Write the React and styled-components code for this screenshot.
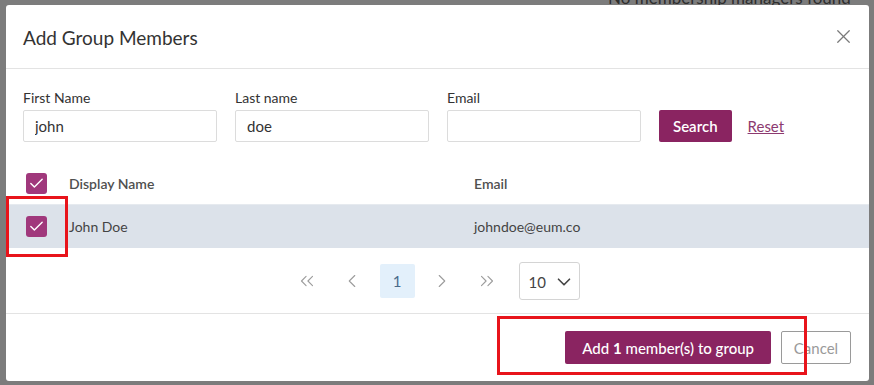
import styled, { createGlobalStyle } from "styled-components";
import { ChevronsLeft, ChevronLeft, ChevronRight, ChevronsRight, ChevronDown, X, Check } from "lucide-react";

const GlobalStyle = createGlobalStyle`
  html, body { margin: 0; padding: 0; }
  body {
    width: 874px;
    height: 385px;
    overflow: hidden;
    background: #7c7c7c;
    font-family: "Lato", "Open Sans", sans-serif;
  }
`;

const purple = "#8a2461";

const Backdrop = styled.div`
  position: relative;
  width: 874px;
  height: 385px;
  background: #7c7c7c;
  overflow: hidden;
`;

const BehindText = styled.div`
  position: absolute;
  left: 608px;
  top: -12px;
  font-size: 17px;
  line-height: 20px;
  color: #2e2e2e;
`;

const Modal = styled.div`
  position: absolute;
  left: 6px;
  top: 5px;
  width: 863px;
  height: 376px;
  background: #fff;
  border-radius: 3px;
  display: flex;
  flex-direction: column;
`;

const Header = styled.div`
  height: 63px;
  padding: 0 17px;
  display: flex;
  align-items: center;
  justify-content: space-between;
  border-bottom: 1px solid #e3e3e3;
`;

const Title = styled.h2`
  margin: 0;
  font-size: 19px;
  font-weight: 400;
  color: #333;
  padding-top: 2px;
`;

const CloseButton = styled.button`
  border: none;
  background: none;
  padding: 0;
  margin-right: -3px;
  color: #7a7a7a;
  display: flex;
`;

const SearchForm = styled.div`
  display: flex;
  align-items: flex-end;
  gap: 18px;
  padding: 19px 17px 0;
`;

const Field = styled.label`
  display: flex;
  flex-direction: column;
  gap: 2px;
  width: 194px;
`;

const Label = styled.span`
  font-size: 14px;
  line-height: 20px;
  color: #333;
`;

const Input = styled.input`
  box-sizing: border-box;
  height: 32px;
  width: 100%;
  border: 1px solid #dcdcdc;
  border-radius: 2px;
  padding: 0 11px;
  font-family: inherit;
  font-size: 15px;
  color: #333;
  outline: none;
`;

const PrimaryButton = styled.button`
  height: ${(p) => p.$h || 32}px;
  padding: 0 ${(p) => p.$px || 14}px;
  border: none;
  border-radius: 2px;
  background: ${purple};
  color: #fff;
  font-family: inherit;
  font-size: 15px;
  font-weight: ${(p) => p.$weight || 600};
  cursor: pointer;
`;

const ResetLink = styled.a`
  height: 32px;
  margin-left: -2px;
  display: flex;
  align-items: center;
  font-size: 15px;
  color: #8c3a70;
  text-decoration: underline;
`;

const Table = styled.div`
  margin-top: 20px;
  display: flex;
  flex-direction: column;
`;

const Row = styled.div`
  display: grid;
  grid-template-columns: 43px 405px 1fr;
  align-items: center;
  height: ${(p) => (p.$head ? 42 : 43)}px;
  padding-left: 20px;
  background: ${(p) => (p.$selected ? "#dce2ea" : "#fff")};
  border-top: ${(p) => (p.$head ? "none" : "1px solid #e6eaef")};
  font-size: 14px;
  color: ${(p) => (p.$head ? "#505050" : "#444")};
  font-weight: ${(p) => (p.$head ? 600 : 400)};
`;

const Checkbox = styled.span`
  width: 21px;
  height: 21px;
  border-radius: 3px;
  background: #a0387c;
  color: #fff;
  display: flex;
  align-items: center;
  justify-content: center;
`;

const Pager = styled.div`
  height: 65px;
  display: flex;
  align-items: center;
  justify-content: center;
  gap: 10px;
  border-bottom: 1px solid #e3e3e3;
  padding-right: 6px;
`;

const PageItem = styled.span`
  width: 35px;
  height: 34px;
  display: flex;
  align-items: center;
  justify-content: center;
  border-radius: 2px;
  font-size: 15px;
  color: ${(p) => (p.$active ? "#4a6a8a" : "#9c9c9c")};
  background: ${(p) => (p.$active ? "#e3f0fb" : "transparent")};
`;

const PageSize = styled.div`
  margin-left: 4px;
  box-sizing: border-box;
  width: 61px;
  height: 38px;
  border: 1px solid #d4d4d4;
  border-radius: 3px;
  display: flex;
  align-items: center;
  gap: 7px;
  padding: 2px 0 0 9px;
  font-size: 15px;
  color: #444;
`;

const Footer = styled.div`
  flex: 1;
  display: flex;
  align-items: center;
  justify-content: flex-end;
  gap: 10px;
  padding: 0 18px 0 0;
`;

const CancelButton = styled.button`
  height: 33px;
  width: 70px;
  border: 1px solid #9a9a9a;
  border-radius: 2px;
  background: #fff;
  color: #9a9a9a;
  font-family: inherit;
  font-size: 15px;
`;

const Highlight = styled.div`
  position: absolute;
  left: ${(p) => p.$x}px;
  top: ${(p) => p.$y}px;
  width: ${(p) => p.$w}px;
  height: ${(p) => p.$h}px;
  box-sizing: border-box;
  border: 3px solid #e8141b;
  pointer-events: none;
`;

const CheckBox = () => (
  <Checkbox>
    <Check size={17} strokeWidth={2} />
  </Checkbox>
);

export default function App() {
  return (
    <>
      <GlobalStyle />
      <Backdrop>
        <BehindText>No membership managers found</BehindText>
        <Modal>
          <Header>
            <Title>Add Group Members</Title>
            <CloseButton aria-label="Close">
              <X size={23} strokeWidth={1.3} />
            </CloseButton>
          </Header>

          <SearchForm>
            <Field>
              <Label>First Name</Label>
              <Input defaultValue="john" />
            </Field>
            <Field>
              <Label>Last name</Label>
              <Input defaultValue="doe" />
            </Field>
            <Field>
              <Label>Email</Label>
              <Input />
            </Field>
            <PrimaryButton $px={14}>Search</PrimaryButton>
            <ResetLink>Reset</ResetLink>
          </SearchForm>

          <Table>
            <Row $head>
              <CheckBox />
              <span>Display Name</span>
              <span>Email</span>
            </Row>
            <Row $selected>
              <CheckBox />
              <span>John Doe</span>
              <span>johndoe@eum.co</span>
            </Row>
          </Table>

          <Pager>
            <PageItem><ChevronsLeft size={22} strokeWidth={1.2} /></PageItem>
            <PageItem><ChevronLeft size={22} strokeWidth={1.2} /></PageItem>
            <PageItem $active>1</PageItem>
            <PageItem><ChevronRight size={22} strokeWidth={1.2} /></PageItem>
            <PageItem><ChevronsRight size={22} strokeWidth={1.2} /></PageItem>
            <PageSize>
              10
              <ChevronDown size={22} strokeWidth={1.8} />
            </PageSize>
          </Pager>

          <Footer>
            <PrimaryButton $h={33} $px={17} $weight={500}>
              Add <b>1</b> member(s) to group
            </PrimaryButton>
            <CancelButton>Cancel</CancelButton>
          </Footer>
        </Modal>
        <Highlight $x={6} $y={196} $w={62} $h={61} />
        <Highlight $x={497} $y={316} $w={310} $h={59} />
      </Backdrop>
    </>
  );
}
